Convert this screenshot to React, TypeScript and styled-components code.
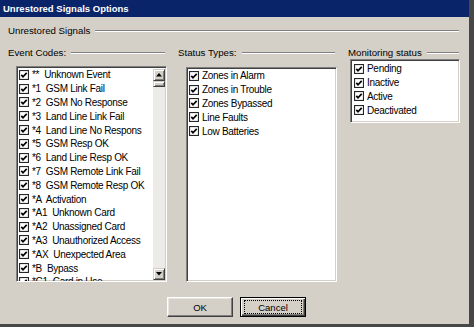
import React from 'react'
import styled, { createGlobalStyle } from 'styled-components'

const GlobalStyle = createGlobalStyle`
  html, body {
    margin: 0;
    padding: 0;
    background: #d4d0c8;
  }
  body {
    font-family: "Liberation Sans", Arial, sans-serif;
    color: #000000;
  }
`;

const StyledWindow = styled.div`
  width: 474px;
  height: 327px;
  box-sizing: border-box;
  display: flex;
  flex-direction: column;
  overflow: hidden;
  background-color: #d4d0c8;
  border-right: 5px solid #474747;
  border-bottom: 3px solid #474747;
`;

const StyledTitleBar = styled.div`
  height: 17px;
  padding-left: 3px;
  background-color: #0a246a;
  color: #ffffff;
  font-size: 9.5px;
  font-weight: bold;
  line-height: 17px;
`;

const StyledBody = styled.div`
  flex: 1;
  display: flex;
  flex-direction: column;
  padding: 7px 9px 0 8px;
`;

const StyledGroupHeader = styled.div<{ $right?: number }>`
  display: flex;
  align-items: center;
  gap: 5px;
  height: 13px;
  margin-right: ${({ $right }) => $right ?? 0}px;
  font-size: 9.7px;
  white-space: nowrap;
`;

const StyledRule = styled.div`
  flex: 1;
  height: 0;
  border-top: 1px solid #808080;
  border-bottom: 1px solid #ffffff;
`;

const StyledColumns = styled.div`
  display: grid;
  grid-template-columns: 159px 159px 112px;
  column-gap: 11px;
  margin-top: 9px;
  align-items: start;
`;

const StyledColumn = styled.div`
  display: flex;
  flex-direction: column;
`;

const StyledListBox = styled.div<{ $w: number; $h: number; $left: number; $top: number; $pad: number }>`
  display: flex;
  box-sizing: border-box;
  width: ${({ $w }) => $w}px;
  height: ${({ $h }) => $h}px;
  margin-left: ${({ $left }) => $left}px;
  margin-top: ${({ $top }) => $top}px;
  padding: ${({ $pad }) => $pad}px 0 0 ${({ $pad }) => $pad + 1}px;
  background-color: #ffffff;
  border: 1px solid;
  border-color: #808080 #ffffff #ffffff #808080;
  box-shadow: inset 1px 1px #404040, inset -1px -1px #d4d0c8;
  overflow: hidden;
`;

const StyledItems = styled.div`
  flex: 1;
  display: flex;
  flex-direction: column;
  overflow: hidden;
`;

const StyledRow = styled.div`
  display: flex;
  align-items: center;
  flex: none;
  gap: 3px;
  height: 13.8px;
  font-size: 10px;
  letter-spacing: -0.3px;
  white-space: pre;
`;

const StyledScrollBar = styled.div`
  width: 12px;
  margin: 1px 1px 1px 0;
  display: flex;
  flex-direction: column;
  background-color: #ecebe8;
`;

const StyledScrollButton = styled.div`
  box-sizing: border-box;
  width: 12px;
  height: 12px;
  display: flex;
  align-items: center;
  justify-content: center;
  background-color: #d4d0c8;
  border: 1px solid;
  border-color: #d4d0c8 #404040 #404040 #d4d0c8;
  box-shadow: inset 1px 1px #ffffff, inset -1px -1px #808080;
`;

const StyledThumb = styled(StyledScrollButton)`
  height: 6px;
`;

const StyledTrack = styled.div`
  flex: 1;
`;

const StyledButtons = styled.div`
  display: flex;
  justify-content: center;
  gap: 7px;
  margin-top: 15px;
  padding-left: 5px;
`;

const StyledButton = styled.button<{ $default?: boolean }>`
  box-sizing: border-box;
  width: 66px;
  height: 20px;
  padding: 0;
  display: flex;
  align-items: center;
  justify-content: center;
  background-color: #d4d0c8;
  font-family: "Liberation Sans", Arial, sans-serif;
  font-size: 9.5px;
  color: #000000;
  border: 1px solid;
  border-color: ${({ $default }) => ($default ? '#000000' : '#ffffff #404040 #404040 #ffffff')};
  box-shadow: ${({ $default }) =>
    $default
      ? 'inset 1px 1px #ffffff, inset -1px -1px #404040, inset -2px -2px #808080'
      : 'inset -1px -1px #808080, inset 1px 1px #e8e6e2'};
`;

const StyledFocus = styled.span`
  display: flex;
  align-items: center;
  justify-content: center;
  width: 56px;
  height: 12px;
  border: 1px dotted #000000;
`;

const CheckBox: React.FC = () => (
  <svg width="10" height="10" viewBox="0 0 10 10">
    <rect x="0.5" y="0.5" width="9" height="9" fill="#ffffff" stroke="#262626" strokeWidth="1.2" />
    <polyline points="2.3,4.9 4,6.8 7.7,2.8" fill="none" stroke="#000000" strokeWidth="1.7" />
  </svg>
);

const Arrow: React.FC<{ down?: boolean }> = ({ down }) => (
  <svg width="6" height="4" viewBox="0 0 6 4">
    <polygon points={down ? '0,0 6,0 3,3.5' : '0,3.5 6,3.5 3,0'} fill="#000000" />
  </svg>
);

const eventCodes = [
  ['**', 'Unknown Event'],
  ['*1', 'GSM Link Fail'],
  ['*2', 'GSM No Response'],
  ['*3', 'Land Line Link Fail'],
  ['*4', 'Land Line No Respons'],
  ['*5', 'GSM Resp OK'],
  ['*6', 'Land Line Resp OK'],
  ['*7', 'GSM Remote Link Fail'],
  ['*8', 'GSM Remote Resp OK'],
  ['*A', 'Activation'],
  ['*A1', 'Unknown Card'],
  ['*A2', 'Unassigned Card'],
  ['*A3', 'Unauthorized Access'],
  ['*AX', 'Unexpected Area'],
  ['*B', 'Bypass'],
  ['*C1', 'Card in Use'],
];

const statusTypes = ['Zones in Alarm', 'Zones in Trouble', 'Zones Bypassed', 'Line Faults', 'Low Batteries'];

const monitoring = ['Pending', 'Inactive', 'Active', 'Deactivated'];

const Item: React.FC<{ label: string }> = ({ label }) => (
  <StyledRow>
    <CheckBox />
    <span>{label}</span>
  </StyledRow>
);

const App: React.FC = () => {
  return (
    <StyledWindow>
      <GlobalStyle />
      <StyledTitleBar>Unrestored Signals Options</StyledTitleBar>
      <StyledBody>
        <StyledGroupHeader $right={1}>
          Unrestored Signals
          <StyledRule />
        </StyledGroupHeader>
        <StyledColumns>
          <StyledColumn>
            <StyledGroupHeader $right={2}>
              Event Codes:
              <StyledRule />
            </StyledGroupHeader>
            <StyledListBox $w={151} $h={216} $left={8} $top={7} $pad={1}>
              <StyledItems>
                {eventCodes.map(([code, name]) => (
                  <Item key={code} label={`${code}  ${name}`} />
                ))}
              </StyledItems>
              <StyledScrollBar>
                <StyledScrollButton>
                  <Arrow />
                </StyledScrollButton>
                <StyledThumb />
                <StyledTrack />
                <StyledScrollButton>
                  <Arrow down />
                </StyledScrollButton>
              </StyledScrollBar>
            </StyledListBox>
          </StyledColumn>
          <StyledColumn>
            <StyledGroupHeader $right={2}>
              Status Types:
              <StyledRule />
            </StyledGroupHeader>
            <StyledListBox $w={151} $h={215} $left={8} $top={8} $pad={1}>
              <StyledItems>
                {statusTypes.map((s) => (
                  <Item key={s} label={s} />
                ))}
              </StyledItems>
            </StyledListBox>
          </StyledColumn>
          <StyledColumn>
            <StyledGroupHeader $right={1}>
              Monitoring status
              <StyledRule />
            </StyledGroupHeader>
            <StyledListBox $w={110} $h={64} $left={2} $top={0} $pad={2}>
              <StyledItems>
                {monitoring.map((m) => (
                  <Item key={m} label={m} />
                ))}
              </StyledItems>
            </StyledListBox>
          </StyledColumn>
        </StyledColumns>
        <StyledButtons>
          <StyledButton>OK</StyledButton>
          <StyledButton $default>
            <StyledFocus>Cancel</StyledFocus>
          </StyledButton>
        </StyledButtons>
      </StyledBody>
    </StyledWindow>
  )
}

export default App
